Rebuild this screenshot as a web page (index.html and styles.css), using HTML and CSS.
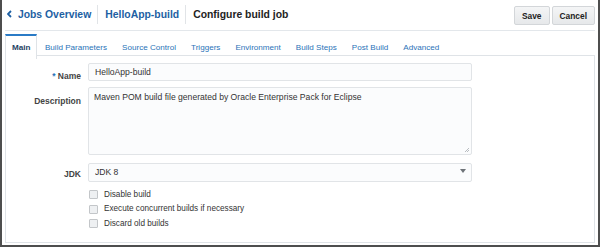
FILE: index.html
```html
<!DOCTYPE html>
<html lang="en">
<head>
  <meta charset="UTF-8">
  <title>Configure build job</title>
  <link rel="stylesheet" href="styles.css">
</head>
<body>
  <div class="frame">
    <div class="header">
      <div class="crumbs">
        <a class="crumb back" href="#">
          <svg class="chevron" width="5" height="8" viewBox="0 0 5 8"><polyline points="4,1 1,4 4,7" fill="none" stroke="#1d5fa3" stroke-width="1.8"/></svg>
          Jobs Overview
        </a>
        <a class="crumb" href="#">HelloApp-build</a>
        <span class="crumb current">Configure build job</span>
      </div>
      <div class="actions">
        <button class="btn">Save</button>
        <button class="btn">Cancel</button>
      </div>
    </div>

    <ul class="tabs">
      <li class="tab active">Main</li>
      <li class="tab">Build Parameters</li>
      <li class="tab">Source Control</li>
      <li class="tab">Triggers</li>
      <li class="tab">Environment</li>
      <li class="tab">Build Steps</li>
      <li class="tab">Post Build</li>
      <li class="tab">Advanced</li>
    </ul>

    <div class="panel">
      <div class="form">
        <label class="label label-name"><span class="req">*</span> Name</label>
        <input class="field" type="text" value="HelloApp-build">

        <label class="label label-desc">Description</label>
        <div class="area-wrap">
          <textarea class="field area">Maven POM build file generated by Oracle Enterprise Pack for Eclipse</textarea>
          <svg class="grip" width="6" height="6" viewBox="0 0 6 6"><path d="M5 1 L1 5 M5 3 L3 5" stroke="#b9bdc1" stroke-width="1"/></svg>
        </div>

        <label class="label label-jdk">JDK</label>
        <div class="select-wrap">
          <select class="field select">
            <option>JDK 8</option>
          </select>
        </div>

        <div class="checks">
          <label class="check"><input type="checkbox"> Disable build</label>
          <label class="check"><input type="checkbox"> Execute concurrent builds if necessary</label>
          <label class="check"><input type="checkbox"> Discard old builds</label>
        </div>
      </div>
    </div>
  </div>
</body>
</html>
```

FILE: styles.css
```css
body{
  margin: 0;
  font-family: "Liberation Sans", Arial, sans-serif;
  color: #333;
  background: #fff;
}
.frame{
  width: 600px;
  height: 247px;
  box-sizing: border-box;
  border: 2px solid #4e4e4e;
  border-top: 0;
  padding: 0 3px;
}

/* header */
.header{
  height: 31px;
  box-sizing: border-box;
  border-bottom: 1px solid #e3e7eb;
  display: flex;
  align-items: center;
  justify-content: space-between;
}
.crumbs{
  display: flex;
  align-items: center;
  padding-left: 2px;
  margin-top: -2px;
}
.crumb{
  font-size: 10.4px;
  font-weight: bold;
  color: #1d5fa3;
  text-decoration: none;
  padding: 3px 6px 3px 7px;
  border-left: 1px solid #e1e4e7;
  line-height: 13px;
}
.crumb.back{
  border-left: 0;
  padding-left: 0;
}
.chevron{
  margin-right: 3px;
}
.crumb.current{
  color: #222;
}
.actions{
  display: flex;
  gap: 2px;
  margin-top: 1px;
}
.btn{
  font-family: inherit;
  font-size: 8.4px;
  font-weight: bold;
  color: #222;
  height: 19px;
  padding: 0 7px;
  border: 1px solid #d3d6d9;
  border-radius: 2px;
  background: linear-gradient(#f4f5f6, #e6e8ea);
}

/* tabs */
.tabs{
  list-style: none;
  margin: 3px 0 0 0;
  padding: 0;
  display: flex;
  height: 21px;
}
.tab{
  font-size: 8.1px;
  color: #2a73b8;
  padding: 2px 6.5px 0;
  line-height: 19px;
  border-top: 2px solid transparent;
  border-left: 1px solid transparent;
  border-right: 1px solid transparent;
}
.tab.active{
  color: #1f3f63;
  font-weight: bold;
  padding: 2px 6px 0;
  border-top-color: #2a7bc6;
  border-left-color: #dfe3e7;
  border-right-color: #dfe3e7;
  background: #fff;
  position: relative;
  z-index: 1;
  height: 21px;
}

/* panel */
.panel{
  border: 1px solid #dfe3e7;
  height: 188px;
  box-sizing: border-box;
  padding-top: 7px;
}
.form{
  display: grid;
  grid-template-columns: 75px 384px;
  column-gap: 7px;
  row-gap: 6px;
}
.label{
  font-size: 8.5px;
  font-weight: bold;
  color: #444;
  text-align: right;
}
.label-name{
  padding-top: 8px;
}
.label-desc{
  padding-top: 9px;
}
.label-jdk{
  padding-top: 8px;
}
.req{
  color: #2a73b8;
}
.field{
  box-sizing: border-box;
  width: 384px;
  margin: 0;
  font-family: inherit;
  font-size: 8.6px;
  color: #333;
  background: #fbfcfd;
  border: 1px solid #e1e4e7;
  border-radius: 2px;
  outline: none;
}
input.field{
  height: 18px;
  padding: 0 6px;
}
.area-wrap, .select-wrap{
  position: relative;
}
.area{
  display: block;
  height: 68px;
  padding: 4px 5px;
  resize: none;
  line-height: 11px;
}
.grip{
  position: absolute;
  right: 2px;
  bottom: 2px;
}
.select{
  appearance: none;
  height: 19px;
  padding: 0 6px;
}
.select-wrap::after{
  content: "";
  position: absolute;
  right: 6px;
  top: 8px;
  border-left: 3px solid transparent;
  border-right: 3px solid transparent;
  border-top: 4px solid #6e7378;
}
.checks{
  grid-column: 2;
  display: flex;
  flex-direction: column;
  gap: 4.5px;
  padding-top: 2px;
}
.check{
  font-size: 8.2px;
  color: #333;
  display: flex;
  align-items: center;
  gap: 6px;
  line-height: 10px;
  height: 10px;
}
.check input{
  appearance: none;
  margin: 0 0 0 1px;
  width: 9px;
  height: 9px;
  border: 1px solid #c3c6c9;
  background: #eef0f2;
  border-radius: 1px;
}
```
